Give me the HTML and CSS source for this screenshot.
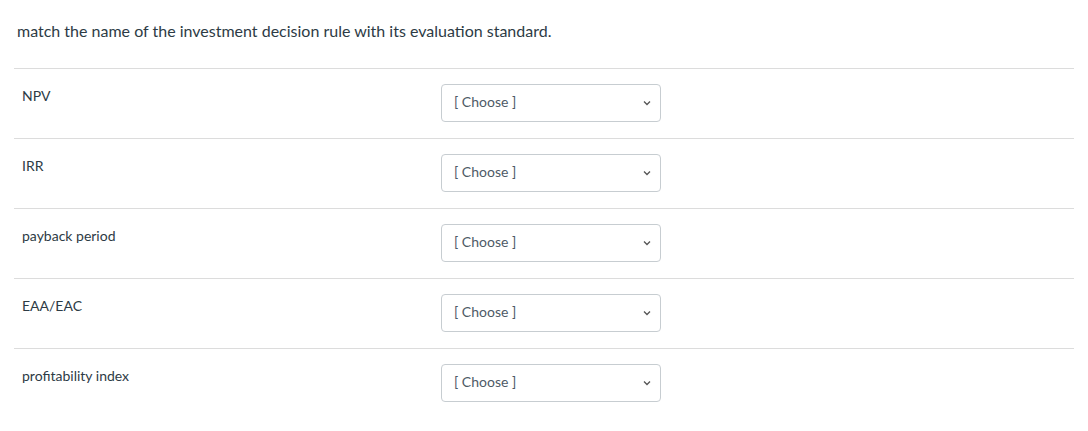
FILE: index.html
```html
<!DOCTYPE html>
<html lang="en">
<head>
    <meta charset="UTF-8">
    <title>Quiz Question</title>
    <link rel="stylesheet" href="styles.css">
</head>
<body>
    <div class="question">
        <p class="question-text">match the name of the investment decision rule with its evaluation standard.</p>
        <div class="answers">
            <div class="answer-row">
                <div class="answer-label">NPV</div>
                <div class="select-wrap">
                    <select><option>[ Choose ]</option></select>
                    <svg class="chevron" width="8" height="6" viewBox="0 0 8 6"><path d="M1 1.5 L4 4.5 L7 1.5" fill="none" stroke="#555" stroke-width="1.3"/></svg>
                </div>
            </div>
            <div class="answer-row">
                <div class="answer-label">IRR</div>
                <div class="select-wrap">
                    <select><option>[ Choose ]</option></select>
                    <svg class="chevron" width="8" height="6" viewBox="0 0 8 6"><path d="M1 1.5 L4 4.5 L7 1.5" fill="none" stroke="#555" stroke-width="1.3"/></svg>
                </div>
            </div>
            <div class="answer-row">
                <div class="answer-label">payback period</div>
                <div class="select-wrap">
                    <select><option>[ Choose ]</option></select>
                    <svg class="chevron" width="8" height="6" viewBox="0 0 8 6"><path d="M1 1.5 L4 4.5 L7 1.5" fill="none" stroke="#555" stroke-width="1.3"/></svg>
                </div>
            </div>
            <div class="answer-row">
                <div class="answer-label">EAA/EAC</div>
                <div class="select-wrap">
                    <select><option>[ Choose ]</option></select>
                    <svg class="chevron" width="8" height="6" viewBox="0 0 8 6"><path d="M1 1.5 L4 4.5 L7 1.5" fill="none" stroke="#555" stroke-width="1.3"/></svg>
                </div>
            </div>
            <div class="answer-row">
                <div class="answer-label">profitability index</div>
                <div class="select-wrap">
                    <select><option>[ Choose ]</option></select>
                    <svg class="chevron" width="8" height="6" viewBox="0 0 8 6"><path d="M1 1.5 L4 4.5 L7 1.5" fill="none" stroke="#555" stroke-width="1.3"/></svg>
                </div>
            </div>
        </div>
    </div>
</body>
</html>
```

FILE: styles.css
```css
body {
    margin: 0;
    background: #fff;
    font-family: Lato, "Open Sans", sans-serif;
    color: #2d3b45;
}
.question {
    padding: 20px 14px 0 14px;
}
.question-text {
    margin: 0 0 26px 3px;
    font-size: 16px;
    line-height: 22px;
}
.answer-row {
    display: grid;
    grid-template-columns: 427px 220px;
    height: 70px;
    border-top: 1px solid #dcdcdc;
    box-sizing: border-box;
}
.answer-label {
    padding: 18px 0 0 8px;
    font-size: 14px;
    line-height: 18px;
}
.select-wrap {
    position: relative;
    margin-top: 15px;
    height: 38px;
}
select {
    appearance: none;
    -webkit-appearance: none;
    width: 220px;
    height: 38px;
    border: 1px solid #c7cdd1;
    border-radius: 4px;
    background: #fff;
    padding: 0 0 3px 12px;
    font-family: Lato, "Open Sans", sans-serif;
    font-size: 14px;
    color: #4e5a66;
}
.chevron {
    position: absolute;
    right: 10px;
    top: 16px;
    pointer-events: none;
}
```
